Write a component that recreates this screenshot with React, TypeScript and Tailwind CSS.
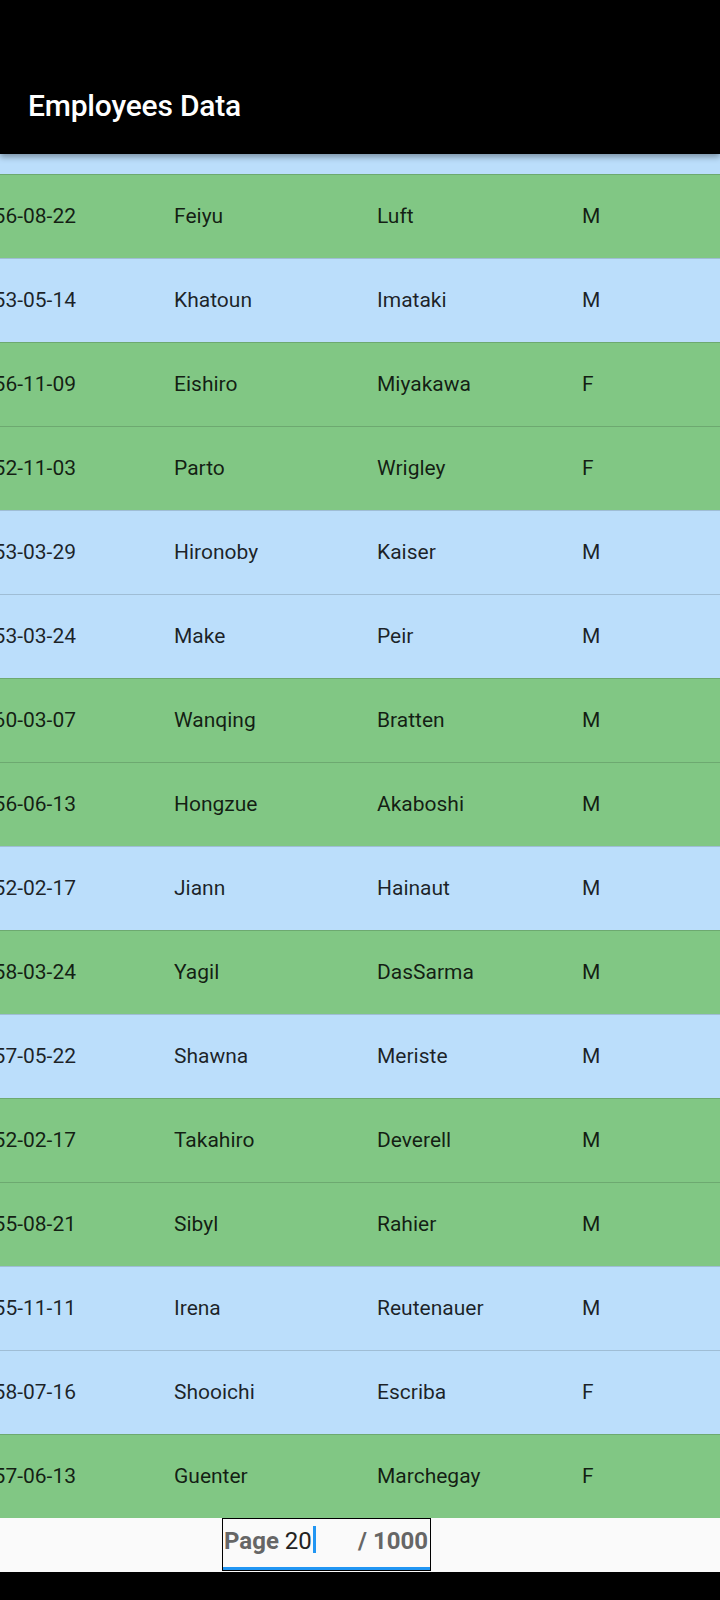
type Employee = {
  birthDate: string;
  firstName: string;
  lastName: string;
  gender: 'M' | 'F';
  tone: 'green' | 'blue';
};

const EMPLOYEES: Employee[] = [
  { birthDate: '1956-08-22', firstName: 'Feiyu', lastName: 'Luft', gender: 'M', tone: 'green' },
  { birthDate: '1953-05-14', firstName: 'Khatoun', lastName: 'Imataki', gender: 'M', tone: 'blue' },
  { birthDate: '1956-11-09', firstName: 'Eishiro', lastName: 'Miyakawa', gender: 'F', tone: 'green' },
  { birthDate: '1952-11-03', firstName: 'Parto', lastName: 'Wrigley', gender: 'F', tone: 'green' },
  { birthDate: '1953-03-29', firstName: 'Hironoby', lastName: 'Kaiser', gender: 'M', tone: 'blue' },
  { birthDate: '1953-03-24', firstName: 'Make', lastName: 'Peir', gender: 'M', tone: 'blue' },
  { birthDate: '1960-03-07', firstName: 'Wanqing', lastName: 'Bratten', gender: 'M', tone: 'green' },
  { birthDate: '1956-06-13', firstName: 'Hongzue', lastName: 'Akaboshi', gender: 'M', tone: 'green' },
  { birthDate: '1952-02-17', firstName: 'Jiann', lastName: 'Hainaut', gender: 'M', tone: 'blue' },
  { birthDate: '1958-03-24', firstName: 'Yagil', lastName: 'DasSarma', gender: 'M', tone: 'green' },
  { birthDate: '1957-05-22', firstName: 'Shawna', lastName: 'Meriste', gender: 'M', tone: 'blue' },
  { birthDate: '1952-02-17', firstName: 'Takahiro', lastName: 'Deverell', gender: 'M', tone: 'green' },
  { birthDate: '1955-08-21', firstName: 'Sibyl', lastName: 'Rahier', gender: 'M', tone: 'green' },
  { birthDate: '1955-11-11', firstName: 'Irena', lastName: 'Reutenauer', gender: 'M', tone: 'blue' },
  { birthDate: '1958-07-16', firstName: 'Shooichi', lastName: 'Escriba', gender: 'F', tone: 'blue' },
  { birthDate: '1957-06-13', firstName: 'Guenter', lastName: 'Marchegay', gender: 'F', tone: 'green' },
];

const TONE_BG: Record<Employee['tone'], string> = {
  green: 'bg-[#81c784]',
  blue: 'bg-[#bbdefb]',
};

export default function App() {
  return (
    <div
      className="flex h-[1600px] w-[720px] flex-col overflow-hidden bg-[#fafafa]"
      style={{ fontFamily: 'Roboto, "Noto Sans", sans-serif' }}
    >
      {/* App bar */}
      <header className="relative z-10 h-[154px] shrink-0 bg-black px-[28px] pt-[86px] shadow-[0_3px_6px_rgba(0,0,0,0.35)]">
        <h1 className="text-[30px] font-medium leading-[40px] tracking-[-0.2px] text-white">Employees Data</h1>
      </header>

      {/* Table, scrolled horizontally and vertically */}
      <div className="shrink-0 overflow-hidden">
        <div className="h-[20px] bg-[#bbdefb]" />
        {EMPLOYEES.map((e, i) => (
          <EmployeeRow key={i} employee={e} />
        ))}
      </div>

      {/* Pager */}
      <div className="h-[54px] shrink-0 bg-[#fafafa]">
        <div className="relative ml-[222px] h-[53px] w-[209px] border-[1.5px] border-black pl-[1px] pt-[8px] text-[24px] leading-[28px]">
          <div className="flex items-start">
            <span className="font-bold text-[#666666]">Page&nbsp;</span>
            <span className="text-[#222222]">20</span>
            <span className="ml-[1px] mt-[-1px] h-[27px] w-[3px] bg-[#2196f3]" />
            <span className="ml-auto pr-[2px] font-bold text-[#666666]">/ 1000</span>
          </div>
          <div className="absolute bottom-0 left-0 right-0 h-[3px] bg-[#2196f3]" />
        </div>
      </div>

      <div className="flex-1 bg-black" />
    </div>
  );
}

function EmployeeRow({ employee }: { employee: Employee }) {
  return (
    <div
      className={`flex h-[84px] items-center border-t border-black/15 text-[21px] text-black/85 ${TONE_BG[employee.tone]}`}
    >
      <span className="ml-[-30px] w-[204px] shrink-0 whitespace-nowrap">{employee.birthDate}</span>
      <span className="w-[203px] shrink-0">{employee.firstName}</span>
      <span className="w-[205px] shrink-0">{employee.lastName}</span>
      <span className="shrink-0">{employee.gender}</span>
    </div>
  );
}
